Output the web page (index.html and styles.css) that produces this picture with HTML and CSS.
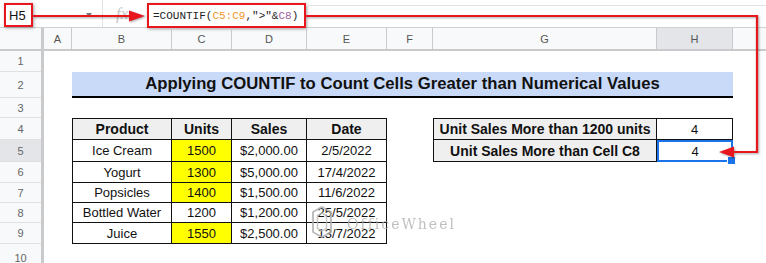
FILE: index.html
```html
<!DOCTYPE html>
<html>
<head>
<meta charset="utf-8">
<link rel="stylesheet" href="styles.css">
</head>
<body>
<div class="app">
  <div class="fbar">
    <div class="namebox">H5</div>
    <div class="nb-rest"><span class="caret"></span></div>
    <div class="fx">fx</div>
    <div class="formula">=COUNTIF(<span class="rg1">C5:C9</span>,"&gt;"&amp;<span class="rg2">C8</span>)</div>
    <div class="fbar-rest"></div>
  </div>

  <div class="colhead">
    <div class="ch corner"></div>
    <div class="ch">A</div>
    <div class="ch">B</div>
    <div class="ch">C</div>
    <div class="ch">D</div>
    <div class="ch">E</div>
    <div class="ch">F</div>
    <div class="ch">G</div>
    <div class="ch active">H</div>
    <div class="ch last"></div>
  </div>

  <div class="body">
    <div class="rowhead">
      <div class="rn">1</div>
      <div class="rn">2</div>
      <div class="rn">3</div>
      <div class="rn">4</div>
      <div class="rn active">5</div>
      <div class="rn">6</div>
      <div class="rn">7</div>
      <div class="rn">8</div>
      <div class="rn">9</div>
      <div class="rn rn10">10</div>
    </div>
    <div class="cells">
      <div class="title">Applying COUNTIF to Count Cells Greater than Numerical Values</div>

      <div class="t th tl tt cB r4">Product</div>
      <div class="t th tt cC r4">Units</div>
      <div class="t th tt cD r4">Sales</div>
      <div class="t th tt cE r4">Date</div>

      <div class="t tl cB r5">Ice Cream</div>
      <div class="t yel cC r5">1500</div>
      <div class="t cD r5">$2,000.00</div>
      <div class="t cE r5">2/5/2022</div>

      <div class="t tl cB r6">Yogurt</div>
      <div class="t yel cC r6">1300</div>
      <div class="t cD r6">$5,000.00</div>
      <div class="t cE r6">17/4/2022</div>

      <div class="t tl cB r7">Popsicles</div>
      <div class="t yel cC r7">1400</div>
      <div class="t cD r7">$1,500.00</div>
      <div class="t cE r7">11/6/2022</div>

      <div class="t tl cB r8">Bottled Water</div>
      <div class="t cC r8">1200</div>
      <div class="t cD r8">$1,200.00</div>
      <div class="t cE r8">25/5/2022</div>

      <div class="t tl cB r9">Juice</div>
      <div class="t yel cC r9">1550</div>
      <div class="t cD r9">$2,500.00</div>
      <div class="t cE r9">13/7/2022</div>

      <div class="t th tl tt cG r4">Unit Sales More than 1200 units</div>
      <div class="t tt cH r4">4</div>
      <div class="t th tl cG r5">Unit Sales More than Cell C8</div>
      <div class="t sel cH r5">4</div>
    </div>
  </div>

  <div class="watermark">
    <svg class="wm-logo" width="22" height="34" viewBox="0 0 22 34">
      <path d="M11 2 L20 7 L20 27 L11 32 L2 27 L2 7 Z" fill="none" stroke="#b0b0b0" stroke-width="2"/>
      <path d="M11 8 L15.5 10.5 L15.5 23.5 L11 26 L6.5 23.5 L6.5 10.5 Z" fill="none" stroke="#bcbcbc" stroke-width="1.5"/>
    </svg>
    <span class="wm-text">OfficeWheel</span>
  </div>

  <svg class="annot" width="766" height="263" viewBox="0 0 766 263">
    <g class="redline">
      <line x1="33" y1="16" x2="132" y2="16" stroke="#e8161d" stroke-width="2"/>
      <polygon points="129,10.5 145,16 129,21.5" fill="#e8161d"/>
      <path d="M306 16 H757 V152 H732" fill="none" stroke="#e8161d" stroke-width="2.2"/>
      <polygon points="734,146.5 719,152 734,157.5" fill="#e8161d"/>
    </g>
  </svg>
</div>
</body>
</html>
```

FILE: styles.css
```css
* { box-sizing: border-box; }

html, body {
  margin: 0;
  padding: 0;
  background: #fff;
}

body {
  width: 766px;
  height: 263px;
  overflow: hidden;
  font-family: "Liberation Sans", Arial, sans-serif;
  color: #000;
}

.app {
  position: relative;
  width: 766px;
  height: 263px;
}

/* formula bar */
.fbar {
  display: flex;
  height: 28px;
  align-items: flex-start;
  border-bottom: 1px solid #d0d0d0;
}

.namebox {
  margin: 3px 0 0 4px;
  width: 29px;
  height: 24px;
  border: 2px solid #e8161d;
  box-shadow: 1px 1px 3px rgba(0, 0, 0, 0.35);
  font-size: 13px;
  display: flex;
  align-items: center;
  padding-left: 3px;
  color: #111;
}

.nb-rest {
  width: 69px;
  height: 27px;
  display: flex;
  align-items: center;
  justify-content: flex-end;
  padding-right: 10px;
  padding-top: 2px;
}

.caret {
  width: 0;
  height: 0;
  border-left: 3.5px solid transparent;
  border-right: 3.5px solid transparent;
  border-top: 4px solid #777;
}

.fx {
  width: 45px;
  height: 27px;
  border-left: 1px solid #e3e3e3;
  padding-left: 13px;
  font-family: "Liberation Serif", serif;
  font-style: italic;
  font-size: 17px;
  line-height: 27px;
  color: #c8c8c8;
}

.formula {
  margin-top: 3px;
  width: 159px;
  height: 25px;
  border: 2px solid #e8161d;
  box-shadow: 1px 1px 3px rgba(0, 0, 0, 0.35);
  display: flex;
  align-items: center;
  padding-left: 4px;
  font-family: "Liberation Mono", monospace;
  font-size: 11px;
  color: #222;
  white-space: nowrap;
}

.rg1 { color: #f0962a; }
.rg2 { color: #a0609a; }

.fbar-rest {
  flex: 1;
  margin-top: 5px;
  border-top: 1px solid #e3e3e3;
}

/* column header */
.colhead {
  display: grid;
  grid-template-columns: 44px 28px 100px 60px 75px 80px 46px 224px 76px 1fr;
  height: 23px;
  border-bottom: 2px solid #c8cacc;
  background: #f8f9fa;
}

.ch {
  border-right: 1px solid #c8cacc;
  display: flex;
  align-items: center;
  justify-content: center;
  font-size: 11px;
  color: #555;
}

.ch.corner {
  border-right: 3px solid #c8cacc;
}

.ch.active {
  background: #e3e5e8;
}

.ch.last {
  border-right: none;
}

/* body */
.body {
  display: flex;
}

.rowhead {
  width: 44px;
  display: grid;
  grid-template-rows: 21px 26px 20px 22px 22px 21px 20px 20px 21px 20px;
  background: #f8f9fa;
  border-right: 3px solid #c8cacc;
}

.rn {
  border-bottom: 1px solid #e0e0e0;
  display: flex;
  align-items: center;
  justify-content: center;
  font-size: 11px;
  color: #666;
}

.rn.active {
  background: #e3e5e8;
}

.rn10 {
  align-items: flex-end;
  border-bottom: none;
}

.cells {
  flex: 1;
  display: grid;
  grid-template-columns: 28px 100px 60px 75px 80px 46px 224px 76px 1fr;
  grid-template-rows: 21px 26px 20px 22px 22px 21px 20px 20px 21px 20px;
}

.title {
  grid-column: 2 / 9;
  grid-row: 2;
  background: #c9daf8;
  border-bottom: 2px solid #000;
  display: flex;
  align-items: center;
  justify-content: center;
  font-weight: bold;
  font-size: 16.7px;
  color: #111;
}

.cB { grid-column: 2; }
.cC { grid-column: 3; }
.cD { grid-column: 4; }
.cE { grid-column: 5; }
.cG { grid-column: 7; }
.cH { grid-column: 8; }

.r4 { grid-row: 4; }
.r5 { grid-row: 5; }
.r6 { grid-row: 6; }
.r7 { grid-row: 7; }
.r8 { grid-row: 8; }
.r9 { grid-row: 9; }

.t {
  border-right: 1px solid #111;
  border-bottom: 1px solid #111;
  display: flex;
  align-items: center;
  justify-content: center;
  font-size: 13px;
  color: #111;
  white-space: nowrap;
}

.tl { border-left: 1px solid #111; }
.tt { border-top: 1px solid #111; }

.th {
  background: #efefef;
  font-weight: bold;
  font-size: 14px;
}

.yel { background: #ffff00; }

.sel {
  position: relative;
  border: 2px solid #1a73e8;
}

.sel::after {
  content: "";
  position: absolute;
  right: -5px;
  bottom: -5px;
  width: 7px;
  height: 7px;
  background: #1a73e8;
  border: 1px solid #fff;
}

/* watermark */
.watermark {
  position: absolute;
  left: 311px;
  top: 205px;
  display: flex;
  align-items: center;
  gap: 14px;
  opacity: 0.8;
}

.wm-text {
  font-family: "DejaVu Serif", serif;
  font-size: 14px;
  letter-spacing: 2px;
  color: #b0b0b0;
  margin-top: 4px;
}

/* annotations */
.annot {
  position: absolute;
  left: 0;
  top: 0;
  pointer-events: none;
}

.redline {
  filter: drop-shadow(1px 1px 1px rgba(0, 0, 0, 0.35));
}
```
